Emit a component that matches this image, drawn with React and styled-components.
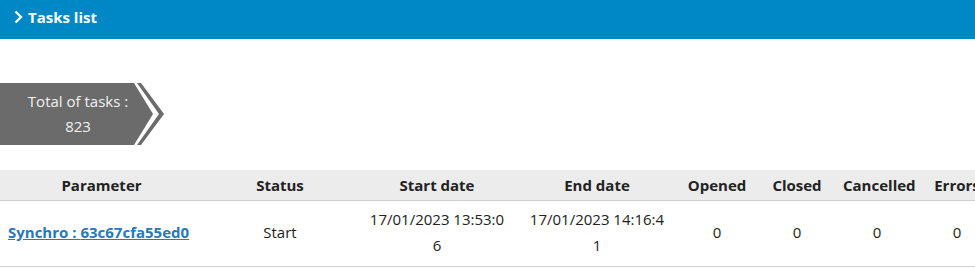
import React from "react";
import styled, { createGlobalStyle } from "styled-components";

const GlobalStyle = createGlobalStyle`
  body {
    margin: 0;
    font-family: "Open Sans", "Noto Sans", sans-serif;
    color: #222;
    background: #fff;
    overflow-x: hidden;
  }
`;

const TopBar = styled.div`
  display: flex;
  align-items: center;
  height: 39px;
  padding: 0 0 6px 13px;
  box-sizing: border-box;
  background-color: #0088c6;
  color: white;
  font-size: 15px;
  font-weight: 700;
  gap: 4px;
`;

const Counter = styled.div`
  position: relative;
  width: 166px;
  height: 62px;
  margin: 44px 0 25px 0;
`;

const CounterBody = styled.div`
  display: flex;
  flex-direction: column;
  align-items: center;
  justify-content: center;
  width: 156px;
  height: 62px;
  box-sizing: border-box;
  background-color: #6b6b6b;
  color: #f2f2f2;
  font-size: 15px;
  line-height: 25px;
  clip-path: polygon(0 0, 134px 0, 153px 31px, 134px 62px, 0 62px);
`;

const Chevron = styled.div`
  position: absolute;
  inset: 0;
  background-color: #6b6b6b;
  clip-path: polygon(137px 0, 141px 0, 164px 31px, 141px 62px, 137px 62px, 159px 31px);
`;

const Table = styled.table`
  width: 997px;
  border-collapse: collapse;
  table-layout: fixed;
  font-size: 15px;
`;

const Th = styled.th`
  box-sizing: border-box;
  width: ${(p) => p.w}px;
  height: 30px;
  padding: 0 6px;
  background-color: #ececec;
  border-bottom: 1px solid #cfcfcf;
  font-weight: 700;
  text-align: center;
  color: #222;
  white-space: nowrap;
`;

const Td = styled.td`
  height: 63px;
  padding: 0 ${(p) => (p.wrap ? 10 : 8)}px 2px;
  text-align: ${(p) => (p.left ? "left" : "center")};
  word-break: break-all;
  line-height: 26px;
  border-bottom: 1px solid #cfcfcf;
`;

const TaskLink = styled.a`
  color: #2a78b8;
  font-weight: 700;
  text-decoration: underline;
  cursor: pointer;
`;

const columns = [
  ["Parameter", 203],
  ["Status", 154],
  ["Start date", 160],
  ["End date", 160],
  ["Opened", 80],
  ["Closed", 80],
  ["Cancelled", 80],
  ["Errors", 80],
];

const tasks = [
  {
    id: "63c67cfa55ed0",
    status: "Start",
    start: "17/01/2023 13:53:06",
    end: "17/01/2023 14:16:41",
    opened: 0,
    closed: 0,
    cancelled: 0,
    errors: 0,
  },
];

function App() {
  return (
    <>
      <GlobalStyle />
      <TopBar>
        <svg width="11" height="14" viewBox="0 0 11 14">
          <path d="M2.5 1.5 L8 7 L2.5 12.5" stroke="white" strokeWidth="2.3" fill="none" />
        </svg>
        <span>Tasks list</span>
      </TopBar>
      <Counter>
        <CounterBody>
          <span>Total of tasks :</span>
          <span>823</span>
        </CounterBody>
        <Chevron />
      </Counter>
      <Table>
        <thead>
          <tr>
            {columns.map(([label, w]) => (
              <Th key={label} w={w}>
                {label}
              </Th>
            ))}
          </tr>
        </thead>
        <tbody>
          {tasks.map((t) => (
            <tr key={t.id}>
              <Td left>
                <TaskLink>Synchro : {t.id}</TaskLink>
              </Td>
              <Td>{t.status}</Td>
              <Td wrap>{t.start}</Td>
              <Td wrap>{t.end}</Td>
              <Td>{t.opened}</Td>
              <Td>{t.closed}</Td>
              <Td>{t.cancelled}</Td>
              <Td>{t.errors}</Td>
            </tr>
          ))}
        </tbody>
      </Table>
    </>
  );
}

export default App;
